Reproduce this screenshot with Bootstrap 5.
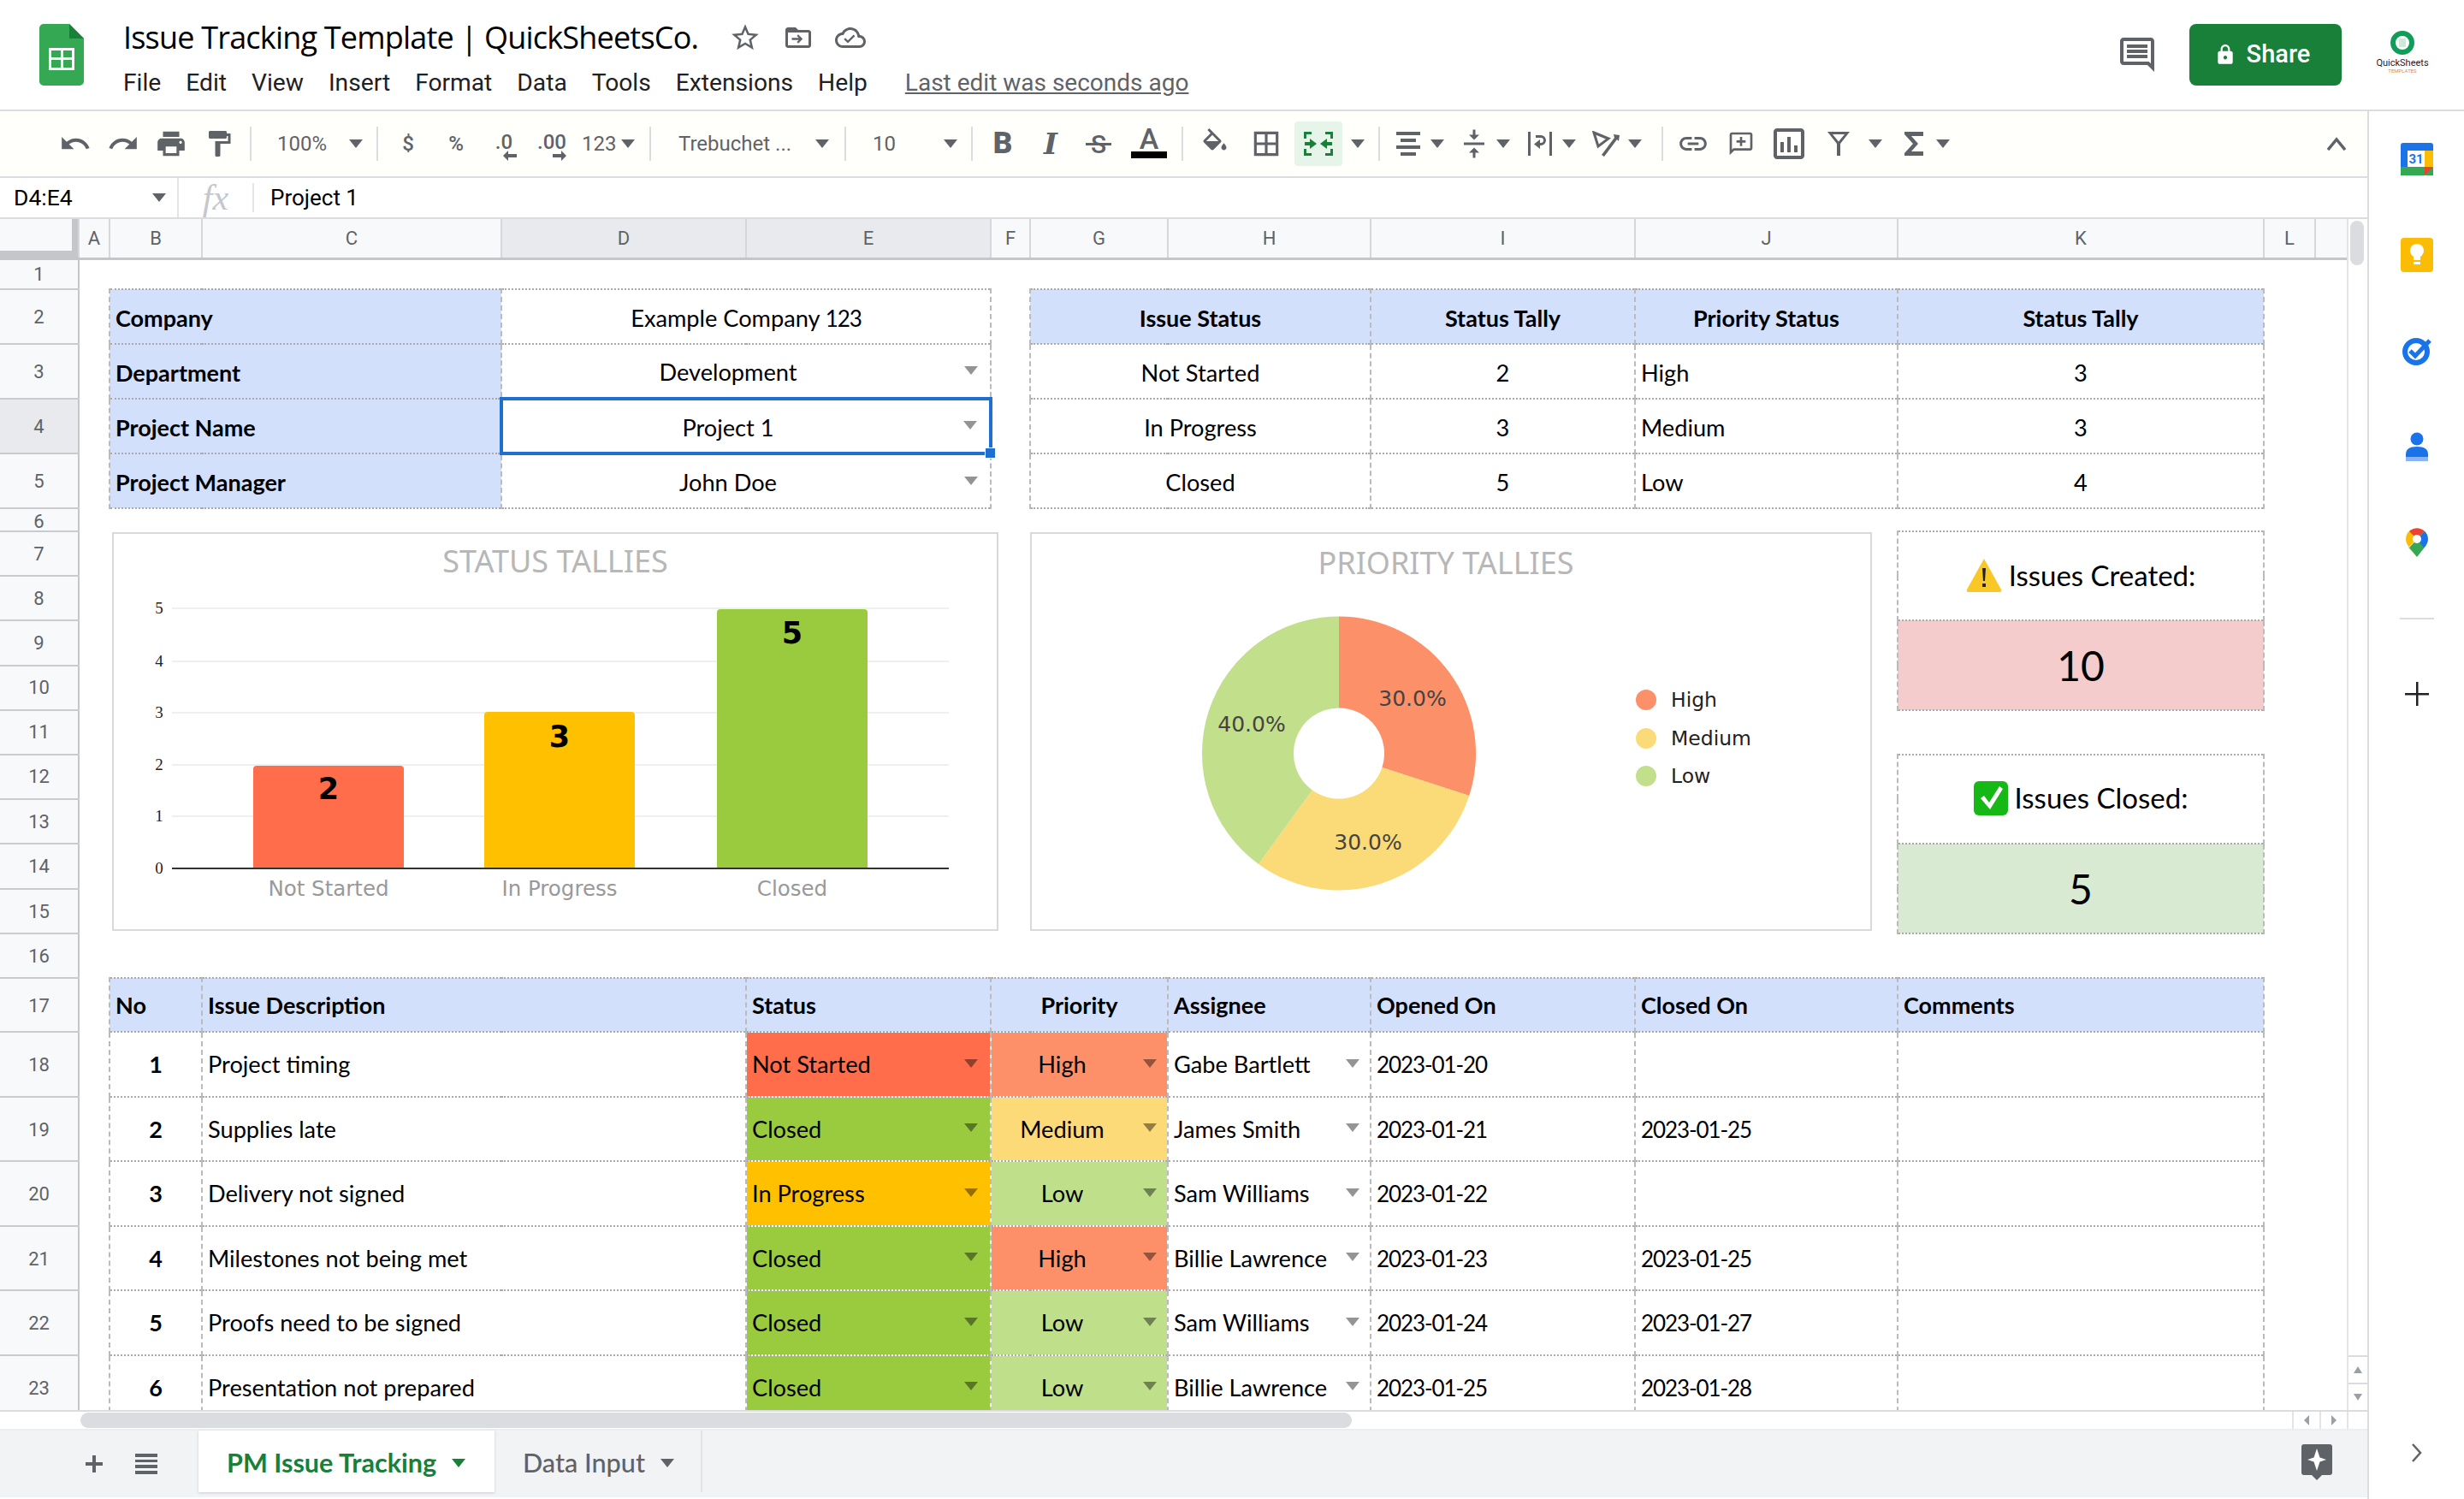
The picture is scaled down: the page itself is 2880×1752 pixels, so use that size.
<!DOCTYPE html>
<html lang="en">
<head>
<meta charset="utf-8">
<title>Issue Tracking Template</title>
<link href="https://cdn.jsdelivr.net/npm/bootstrap@5.3.0/dist/css/bootstrap.min.css" rel="stylesheet">
<style>
html,body{margin:0;width:2880px;height:1752px;overflow:hidden;background:#fff;font-family:Roboto,"Liberation Sans",sans-serif;color:#202124}
svg{display:block;flex:none}
.gi{fill:#5f6368}
.app-head{height:130px;border-bottom:2px solid #dadce0}
.logo{margin-left:46px;margin-top:28px;width:52px;height:72px}
.doc-col{margin-left:46px;padding-top:22px}
.doc-title{font-family:"Open Sans",Roboto,sans-serif;font-size:36px;line-height:44px;color:#000;white-space:nowrap;letter-spacing:-.8px}
.doc-icons{gap:25px;margin-left:36px}
.menu{gap:29px;margin-top:13px;font-size:28.2px;line-height:36px;color:#202124}
.last-edit{color:#5f6368;text-decoration:underline;margin-left:15px;font-size:28px}
.comment-ic{margin-right:37px}
.share{width:178px;height:72px;background:#188038;border-radius:8px;color:#fff;font-size:29px;font-weight:500;gap:12px;margin-right:43px;border:0;padding-right:8px!important}
.share:hover{background:#188038;color:#fff}
.avatar{width:56px;margin-right:44px;margin-top:-6px}
.avatar small{font-size:11px;line-height:11px;color:#222;display:block;white-space:nowrap}
.avatar em{font-size:6px;line-height:8px;color:#d98a3a;font-style:normal;display:block}
.main{height:1622px}
.left{width:2769px;border-right:2px solid #dadce0}
.toolbar{height:78px;border-bottom:2px solid #dadce0;padding-left:60px;padding-right:24px;background:#fffffc;color:#5f6368;font-size:24px}
.tb{width:56px;height:52px;position:relative}
.sep{width:2px;height:40px;background:#dadce0;margin:0 7px}
.sep.first{margin-left:8px}
.caret{width:0;height:0;border-left:8px solid transparent;border-right:8px solid transparent;border-top:10px solid #5f6368;flex:none}
.dd{height:52px}
.dd-zoom{width:132px;padding:0 9px 0 23px}
.dd-num{width:79px;padding-left:7px;gap:6px}
.dd-font{width:212px;padding:0 11px 0 25px}
.dd-size{width:132px;padding:0 9px 0 24px}
.w60{width:60px}.w62{width:62px}
.merge{background:#e6f4ea;border-radius:4px;margin-left:3px}
.w35{width:35px}
.iconcar{width:77px;height:52px}
.iconcar.last{width:84px}
.iconcar>span:first-child{width:52px}
.w26{width:26px}.w14{width:14px;margin-left:-1px}
.sig{margin-left:4px}
.dec{font-size:24px;font-weight:500;margin-top:-5px}
.dec-ar{position:absolute;top:34px}
.dec-ar.l{left:27px}
.dec-ar.r{left:29px}
.fb{font-weight:900;font-size:35px}
.fi{font-family:"DejaVu Serif",serif;font-weight:700;font-style:italic;font-size:34px}
.fs{font-weight:500;font-size:30px}
.fs i{position:absolute;left:13px;right:13px;top:25px;height:3px;background:#5f6368}
.fa{font-weight:500;font-size:34px;line-height:34px;margin-top:-6px}
.abar{width:42px;height:8px;background:#000;margin-top:-2px}
.formula{height:48px;border-bottom:2px solid #dadce0;font-size:26px;color:#000}
.namebox{width:207px;padding:0 13px 0 16px;font-size:26.5px}
.vline{width:2px;height:46px;background:#e3e4e6}
.vline.s{height:34px}
.fx{width:86px;text-align:center;font-family:"Liberation Serif",serif;font-style:italic;font-size:42px;color:#c4c7cb;line-height:1}
.fval{padding-left:19px}
.sheetwrap{height:1392px;overflow:hidden;position:relative}
.sheet-clip{width:2745px;height:1392px;overflow:hidden}
.sheet{width:2745px;table-layout:fixed;border-collapse:collapse;font-family:Lato,"Noto Sans",sans-serif;font-size:27.2px;color:#000;line-height:1}
.sheet td,.sheet th{padding:0 6px;vertical-align:middle;white-space:nowrap;font-weight:400}
.sheet thead th{height:46px;background:#f8f9fa;color:#5f6368;font:400 22px Roboto,sans-serif;text-align:center;border-right:2px solid #d5d7da;border-bottom:3px solid #c4c6c9;padding:0}
.sheet thead th.corner{box-shadow:inset -7px -8px 0 #c4c6c9;background:#f8f9fa}
.sheet thead th.selh{background:#e8eaed}
.sheet tbody th.rh{background:#f8f9fa;color:#5f6368;font:400 22px Roboto,sans-serif;text-align:center;border-right:2px solid #c4c6c9;border-bottom:2px solid #c9cbce;padding:0;overflow:hidden}
.sheet tbody th.rh.selh{background:#e8eaed}
.sheet tbody tr.r26 th.rh{line-height:20px;padding-top:5px;vertical-align:top}
.sheet tbody tr.r63 th.rh,.sheet tbody tr.r75 th.rh{padding-top:2px}
.r36{height:36px}.r64{height:64px}.r26{height:26.5px}.r52{height:52px}.r63{height:63px}.r75{height:75.5px}
.r64 td{padding-top:3px}
.c{border-left:2px dashed #bbb;border-right:2px dashed #bbb;border-top:2px dotted #aaa;border-bottom:2px dotted #aaa}
.sheet td.ctr{text-align:center}
.sheet td.b{font-weight:700;font-size:27px}
.dt{font-size:26px;letter-spacing:-1.1px}
.lab{background:#d3e0fc}
.dd-cell{position:relative}
.sheet td.ddc{padding-left:0;padding-right:42px;text-align:center}
.sheet td.ddc2{padding-left:0;padding-right:40px;text-align:center}
.ar{position:absolute;right:12px;top:50%;margin-top:-6px;width:0;height:0;border-left:8px solid transparent;border-right:8px solid transparent;border-top:10px solid rgba(0,0,0,.42)}
.ar.big{right:14px}
.sel{outline:0;border:4px solid #1f6fd0!important}
.handle{position:absolute;right:-8px;bottom:-8px;width:13px;height:13px;background:#1f6fd0;border:1px solid #fff;z-index:3}
.notst{background:#ff6d4a}.closed{background:#9acb3f}.inprog{background:#ffc000}
.high{background:#fd9069}.med{background:#fbda77}.low{background:#bfdf8a}
.pink{background:#f4cccc}.green{background:#d9ead3}
.sheet td.chartcell{padding:1px 37px 3px 3px;vertical-align:top}
.sheet td.chartcell2{padding:1px 29px 3px 0;vertical-align:top}
.chartbox{border:2px solid #d9d9d9;height:466px;background:#fff}
.t-title{font-family:"Noto Sans",sans-serif;font-size:36px;fill:#b7b7b7}
.t-ax{font-family:"Liberation Serif",serif;font-size:19px;fill:#222}
.t-cat{font-family:"DejaVu Sans",sans-serif;font-size:24.5px;fill:#999}
.t-val{font-family:"DejaVu Sans",sans-serif;font-size:35px;font-weight:700;fill:#000}
.t-pct{font-family:"DejaVu Sans",sans-serif;font-size:25px;fill:#444}
.t-leg{font-family:"DejaVu Sans",sans-serif;font-size:23.5px;fill:#222}
.sheet td.issue{font-size:33px;text-align:center;padding-top:2px}
.sheet td.num{font-size:48px;text-align:center;padding-top:1px}
.vbar{width:24px;border-left:2px solid #e3e4e6;position:relative;background:#fff}
.vthumb{width:16px;height:52px;border-radius:8px;background:#dadce0;margin:2px 0 0 2px}
.varrow{height:32px;border-top:2px solid #dadce0}
.mini-up{width:0;height:0;border-left:5px solid transparent;border-right:5px solid transparent;border-bottom:8px solid #9aa0a6}
.mini-dn{width:0;height:0;border-left:5px solid transparent;border-right:5px solid transparent;border-top:8px solid #9aa0a6}
.mini-l{width:0;height:0;border-top:6px solid transparent;border-bottom:6px solid transparent;border-right:6px solid #9aa0a6}
.mini-r{width:0;height:0;border-top:6px solid transparent;border-bottom:6px solid transparent;border-left:6px solid #9aa0a6}
.hbar{height:24px;border-top:2px solid #dadce0;border-bottom:2px solid #eceef0;padding-left:94px}
.hthumb{width:1486px;height:18px;border-radius:9px;background:#dadce0}
.hbtn{width:32px;height:100%;border-left:2px solid #e3e4e6}
.hbtn.end{width:24px}
.tabs{height:78px;background:#f1f3f4;color:#5f6368}
.tab-tools{width:232px;padding-left:100px;gap:38px;height:100%}
.stab{height:72px;font-family:Lato,"Noto Sans",sans-serif;font-size:30.6px;font-weight:700;gap:18px;white-space:nowrap;padding-top:4px}
.stab.on{width:346px;background:#fff;color:#188038;padding-left:33px;box-shadow:0 1px 3px rgba(60,64,67,.2)}
.stab.on .caret{border-top-color:#188038}
.stab.off{width:243px;padding-left:33px;font-weight:500;border-right:2px solid #e3e4e6}
.explore{margin-right:41px}
.side{width:111px}
.slot{height:112px;width:100%}
.side-div{width:40px;height:2px;background:#dadce0;margin-top:32px}
.plus{margin-top:73px}
.chev{margin-top:auto;margin-bottom:42px}
.side svg text{font-family:Roboto,sans-serif}
.sheet col:nth-child(1){width:92px}.sheet col:nth-child(2){width:36px}.sheet col:nth-child(3){width:108px}.sheet col:nth-child(4){width:350px}.sheet col:nth-child(5),.sheet col:nth-child(6){width:286px}.sheet col:nth-child(7){width:46px}.sheet col:nth-child(8){width:161px}.sheet col:nth-child(9){width:237px}.sheet col:nth-child(10){width:309px}.sheet col:nth-child(11){width:307px}.sheet col:nth-child(12){width:428px}.sheet col:nth-child(13){width:60px}.sheet col:nth-child(14){width:39px}
</style>
</head>
<body>
<header class="app-head d-flex">
  <svg class="logo" viewBox="0 0 52 72"><path d="M5 0h30l17 17v50a5 5 0 0 1-5 5H5a5 5 0 0 1-5-5V5a5 5 0 0 1 5-5z" fill="#34a853"/><path d="M35 0l17 17H35z" fill="#188038"/><path d="M11 28h30v26H11zm3 3v8h11v-8zm14 0v8h10v-8zM14 42v9h11v-9zm14 0v9h10v-9z" fill="#fff" fill-rule="evenodd"/></svg>
  <div class="doc-col">
    <div class="d-flex align-items-center">
      <div class="doc-title">Issue Tracking Template | QuickSheetsCo.</div>
      <div class="doc-icons d-flex align-items-center">
        <svg width="38" height="38" viewBox="0 0 24 24"><path class="gi" d="M22 9.24l-7.19-.62L12 2 9.19 8.63 2 9.24l5.46 4.73L5.82 21 12 17.27 18.18 21l-1.63-7.03L22 9.24zM12 15.4l-3.76 2.27 1-4.28-3.32-2.88 4.38-.38L12 6.1l1.71 4.04 4.38.38-3.32 2.88 1 4.28L12 15.4z"/></svg>
        <svg width="36" height="36" viewBox="0 0 24 24"><path class="gi" d="M20 6h-8l-2-2H4c-1.1 0-2 .9-2 2v12c0 1.1.9 2 2 2h16c1.1 0 2-.9 2-2V8c0-1.1-.9-2-2-2zm0 12H4V8h16v10zM12 9.5l-1.1 1.1 1.6 1.6H7v1.6h5.5l-1.6 1.6 1.1 1.1 3.5-3.5z"/></svg>
        <svg width="36" height="36" viewBox="0 0 24 24"><path class="gi" d="M19.35 10.04C18.67 6.59 15.64 4 12 4 9.11 4 6.6 5.64 5.35 8.04 2.34 8.36 0 10.91 0 14c0 3.31 2.69 6 6 6h13c2.76 0 5-2.24 5-5 0-2.64-2.05-4.78-4.65-4.96zM19 18H6c-2.21 0-4-1.79-4-4 0-2.05 1.53-3.76 3.56-3.97l1.07-.11.5-.95C8.08 7.14 9.94 6 12 6c2.62 0 4.88 1.86 5.39 4.43l.3 1.5 1.53.11c1.56.1 2.78 1.41 2.78 2.96 0 1.65-1.35 3-3 3zM10 14.2l-2-2-1.1 1.1 3.1 3.1 5.6-5.6-1.1-1.1z"/></svg>
      </div>
    </div>
    <nav class="menu d-flex align-items-center">
      <span>File</span><span>Edit</span><span>View</span><span>Insert</span><span>Format</span><span>Data</span><span>Tools</span><span>Extensions</span><span>Help</span><span class="last-edit">Last edit was seconds ago</span>
    </nav>
  </div>
  <div class="ms-auto d-flex align-items-center">
    <svg class="comment-ic" width="48" height="48" viewBox="0 0 24 24"><path class="gi" d="M21.99 4c0-1.1-.89-2-1.99-2H4c-1.1 0-2 .9-2 2v12c0 1.1.9 2 2 2h14l4 4-.01-18zM20 4v13.17L18.83 16H4V4h16zM6 12h12v2H6zm0-3h12v2H6zm0-3h12v2H6z"/></svg>
    <button class="btn share d-flex align-items-center justify-content-center p-0">
      <svg width="26" height="26" viewBox="0 0 24 24"><path fill="#fff" d="M18 8h-1V6c0-2.76-2.24-5-5-5S7 3.24 7 6v2H6c-1.1 0-2 .9-2 2v10c0 1.1.9 2 2 2h12c1.1 0 2-.9 2-2V10c0-1.1-.9-2-2-2zm-6 9c-1.1 0-2-.9-2-2s.9-2 2-2 2 .9 2 2-.9 2-2 2zm3-9H9V6c0-1.66 1.34-3 3-3s3 1.34 3 3v2z"/></svg>
      <span>Share</span>
    </button>
    <div class="avatar d-flex flex-column align-items-center text-center">
      <svg width="28" height="28" viewBox="0 0 28 28"><circle cx="14" cy="14" r="11" fill="#fff" stroke="#0f9d58" stroke-width="6"/><rect x="10" y="9" width="8" height="10" fill="#cfe8d8"/></svg>
      <small class="mt-1">QuickSheets</small><em>TEMPLATES</em>
    </div>
  </div>
</header>

<div class="main d-flex">
  <div class="left d-flex flex-column">
    <div class="toolbar d-flex align-items-center">
      <span class="tb d-flex align-items-center justify-content-center"><svg width="38" height="38" viewBox="0 0 24 24"><path class="gi" d="M12.5 8c-2.65 0-5.05.99-6.9 2.6L2 7v9h9l-3.62-3.62c1.39-1.16 3.16-1.88 5.12-1.88 3.54 0 6.55 2.31 7.6 5.5l2.37-.78C21.08 11.03 17.15 8 12.5 8z"/></svg></span>
      <span class="tb d-flex align-items-center justify-content-center"><svg width="38" height="38" viewBox="0 0 24 24"><path class="gi" d="M18.4 10.6C16.55 8.99 14.15 8 11.5 8c-4.65 0-8.58 3.03-9.96 7.22L3.9 16c1.05-3.19 4.05-5.5 7.6-5.5 1.95 0 3.73.72 5.12 1.88L13 16h9V7l-3.6 3.6z"/></svg></span>
      <span class="tb d-flex align-items-center justify-content-center"><svg width="38" height="38" viewBox="0 0 24 24"><path class="gi" d="M19 8H5c-1.66 0-3 1.34-3 3v6h4v4h12v-4h4v-6c0-1.66-1.34-3-3-3zm-3 11H8v-5h8v5zm3-7c-.55 0-1-.45-1-1s.45-1 1-1 1 .45 1 1-.45 1-1 1zm-1-9H6v4h12V3z"/></svg></span>
      <span class="tb d-flex align-items-center justify-content-center"><svg width="36" height="36" viewBox="0 0 24 24"><path class="gi" d="M18 4V3c0-.55-.45-1-1-1H5c-.55 0-1 .45-1 1v4c0 .55.45 1 1 1h12c.55 0 1-.45 1-1V6h1v4H9v11c0 .55.45 1 1 1h2c.55 0 1-.45 1-1v-9h8V4h-3z"/></svg></span>
      <span class="sep first"></span>
      <span class="dd dd-zoom d-flex align-items-center justify-content-between"><span>100%</span><span class="caret"></span></span>
      <span class="sep"></span>
      <span class="tb d-flex align-items-center justify-content-center fw-medium">$</span>
      <span class="tb d-flex align-items-center justify-content-center fw-medium">%</span>
      <span class="tb d-flex align-items-center justify-content-center"><span class="dec">.0</span><svg class="dec-ar l" width="16" height="12" viewBox="0 0 16 12"><path class="gi" d="M6 0L0 6l6 6V8h10V4H6z"/></svg></span>
      <span class="tb d-flex align-items-center justify-content-center"><span class="dec">.00</span><svg class="dec-ar r" width="16" height="12" viewBox="0 0 16 12"><path class="gi" d="M10 0l6 6-6 6V8H0V4h10z"/></svg></span>
      <span class="dd dd-num d-flex align-items-center"><span>123</span><span class="caret"></span></span>
      <span class="sep"></span>
      <span class="dd dd-font d-flex align-items-center justify-content-between"><span>Trebuchet ...</span><span class="caret"></span></span>
      <span class="sep"></span>
      <span class="dd dd-size d-flex align-items-center justify-content-between"><span>10</span><span class="caret"></span></span>
      <span class="sep"></span>
      <span class="tb d-flex align-items-center justify-content-center fb">B</span>
      <span class="tb d-flex align-items-center justify-content-center fi">I</span>
      <span class="tb d-flex align-items-center justify-content-center fs">S<i></i></span>
      <span class="tb w62 d-flex flex-column align-items-center justify-content-center"><span class="fa">A</span><span class="abar"></span></span>
      <span class="sep"></span>
      <span class="tb w60 d-flex align-items-center justify-content-center"><svg width="36" height="36" viewBox="0 0 24 24"><path class="gi" d="M16.56 8.94L7.62 0 6.21 1.41l2.38 2.38-5.15 5.15c-.59.59-.59 1.54 0 2.12l5.5 5.5c.29.29.68.44 1.06.44s.77-.15 1.06-.44l5.5-5.5c.59-.58.59-1.53 0-2.12zM5.21 10L10 5.21 14.79 10H5.21zM19 11.5s-2 2.17-2 3.5c0 1.1.9 2 2 2s2-.9 2-2c0-1.33-2-3.5-2-3.5z"/></svg></span>
      <span class="tb w60 d-flex align-items-center justify-content-center"><svg width="38" height="38" viewBox="0 0 24 24"><path class="gi" d="M3 3v18h18V3H3zm8 16H5v-6h6v6zm0-8H5V5h6v6zm8 8h-6v-6h6v6zm0-8h-6V5h6v6z"/></svg></span>
      <span class="tb merge d-flex align-items-center justify-content-center"><svg width="34" height="28" viewBox="0 0 34 28" fill="#188038"><path d="M0 0h9v3H3v5H0zM25 0h9v8h-3V3h-6zM0 20h3v5h6v3H0zM31 20h3v8h-9v-3h6z"/><path d="M1 12h6V8l8 6-8 6v-4H1zM33 12h-6V8l-8 6 8 6v-4h6z"/></svg></span>
      <span class="w35 d-flex justify-content-center"><span class="caret"></span></span>
      <span class="sep"></span>
      <span class="iconcar d-flex align-items-center"><span class="d-flex justify-content-center"><svg width="28" height="28" viewBox="0 0 28 28"><path class="gi" d="M0 0h28v4H0zM5 8h18v4H5zM0 16h28v4H0zM5 24h18v4H5z"/></svg></span><span class="caret"></span></span>
      <span class="iconcar d-flex align-items-center"><span class="d-flex justify-content-center"><svg width="36" height="36" viewBox="0 0 24 24"><path class="gi" d="M8 19h3v4h2v-4h3l-4-4-4 4zm8-14h-3V1h-2v4H8l4 4 4-4zM4 11v2h16v-2H4z"/></svg></span><span class="caret"></span></span>
      <span class="iconcar d-flex align-items-center"><span class="d-flex justify-content-center"><svg width="28" height="28" viewBox="0 0 28 28"><path class="gi" d="M0 0h3v28H0zM25 0h3v28h-3zM9 4h6a6 6 0 0 1 0 12h-1v4l-7-5.500 7-5.500v4h1a3 3 0 0 0 0-6H9z"/></svg></span><span class="caret"></span></span>
      <span class="iconcar last d-flex align-items-center"><span class="d-flex justify-content-center"><svg width="32" height="30" viewBox="0 0 32 30"><path d="M2 2l17 7-12 9z" fill="none" stroke="#5f6368" stroke-width="3"/><path class="gi" d="M25 4l7 1-1 7-2-2-15 20-3-2 15-20z"/></svg></span><span class="caret"></span></span>
      <span class="sep"></span>
      <span class="tb d-flex align-items-center justify-content-center"><svg width="38" height="38" viewBox="0 0 24 24"><path class="gi" d="M3.900 12c0-1.710 1.390-3.100 3.100-3.100h4V7H7c-2.760 0-5 2.240-5 5s2.240 5 5 5h4v-1.900H7c-1.710 0-3.100-1.390-3.100-3.100zM8 13h8v-2H8v2zm9-6h-4v1.900h4c1.710 0 3.100 1.390 3.100 3.100s-1.390 3.100-3.100 3.100h-4V17h4c2.760 0 5-2.240 5-5s-2.240-5-5-5z"/></svg></span>
      <span class="tb d-flex align-items-center justify-content-center"><svg width="32" height="32" viewBox="0 0 24 24"><path class="gi" d="M20 2H4c-1.100 0-2 .9-2 2v18l4-4h14c1.100 0 2-.9 2-2V4c0-1.100-.9-2-2-2zm0 14H5.200L4 17.200V4h16v12zM13 6h-2v3H8v2h3v3h2v-3h3V9h-3z"/></svg></span>
      <span class="tb d-flex align-items-center justify-content-center"><svg width="36" height="36" viewBox="3 3 18 18"><path class="gi" d="M19 3H5c-1.100 0-2 .9-2 2v14c0 1.100.9 2 2 2h14c1.100 0 2-.9 2-2V5c0-1.100-.9-2-2-2zm0 16H5V5h14v14zM7 11h2v6H7zM11 8h2v9h-2zM15 13h2v4h-2z"/></svg></span>
      <span class="tb w60 d-flex align-items-center justify-content-center"><svg width="26" height="28" viewBox="0 0 26 28"><path class="gi" d="M0 0h26L15 14v14h-4V14zM6 3l7 8.500L20 3z"/></svg></span>
      <span class="w26 d-flex justify-content-center"><span class="caret"></span></span>
      <span class="tb sig d-flex align-items-center justify-content-center"><svg width="22" height="28" viewBox="0 0 22 28"><path class="gi" d="M0 0h22v5H8l8 9-8 9h14v5H0v-3l10-11L0 3z"/></svg></span>
      <span class="w14 d-flex justify-content-center"><span class="caret"></span></span>
      <svg class="ms-auto" width="24" height="16" viewBox="0 0 24 16"><path d="M2 15L12 3l10 12" fill="none" stroke="#5f6368" stroke-width="3.500"/></svg>
    </div>

    <div class="formula d-flex align-items-center">
      <div class="namebox d-flex align-items-center justify-content-between"><span>D4:E4</span><span class="caret"></span></div>
      <span class="vline"></span>
      <div class="fx">fx</div>
      <span class="vline s"></span>
      <div class="fval">Project 1</div>
    </div>

    <div class="sheetwrap d-flex">
      <div class="sheet-clip">
        <table class="sheet">
          <colgroup><col><col><col><col><col><col><col><col><col><col><col><col><col><col></colgroup>
          <thead>
            <tr><th class="corner"></th><th>A</th><th>B</th><th>C</th><th class="selh">D</th><th class="selh">E</th><th>F</th><th>G</th><th>H</th><th>I</th><th>J</th><th>K</th><th>L</th><th></th></tr>
          </thead>
          <tbody>
            <tr class="r36"><th class="rh">1</th><td colspan="13"></td></tr>
            <tr class="r64"><th class="rh">2</th><td></td><td colspan="2" class="c lab b">Company</td><td colspan="2" class="c ctr">Example Company <span class="dt">123</span></td><td></td><td colspan="2" class="c lab b ctr">Issue Status</td><td class="c lab b ctr">Status Tally</td><td class="c lab b ctr">Priority Status</td><td class="c lab b ctr">Status Tally</td><td colspan="2"></td></tr>
            <tr class="r64"><th class="rh">3</th><td></td><td colspan="2" class="c lab b">Department</td><td colspan="2" class="c ddc dd-cell">Development<span class="ar big"></span></td><td></td><td colspan="2" class="c ctr">Not Started</td><td class="c ctr">2</td><td class="c">High</td><td class="c ctr">3</td><td colspan="2"></td></tr>
            <tr class="r64"><th class="rh selh">4</th><td></td><td colspan="2" class="c lab b">Project Name</td><td colspan="2" class="sel ddc dd-cell">Project 1<span class="ar big"></span><span class="handle"></span></td><td></td><td colspan="2" class="c ctr">In Progress</td><td class="c ctr">3</td><td class="c">Medium</td><td class="c ctr">3</td><td colspan="2"></td></tr>
            <tr class="r64"><th class="rh">5</th><td></td><td colspan="2" class="c lab b">Project Manager</td><td colspan="2" class="c ddc dd-cell">John Doe<span class="ar big"></span></td><td></td><td colspan="2" class="c ctr">Closed</td><td class="c ctr">5</td><td class="c">Low</td><td class="c ctr">4</td><td colspan="2"></td></tr>
            <tr class="r26"><th class="rh">6</th><td colspan="13"></td></tr>
            <tr class="r52"><th class="rh">7</th><td rowspan="9"></td>
              <td colspan="5" rowspan="9" class="chartcell">
                <div class="chartbox">
                  <svg width="1032" height="462" viewBox="133 624 1032 462">
                    <text class="t-title" x="649" y="669" text-anchor="middle">STATUS TALLIES</text>
                    <g stroke="#efefef" stroke-width="2"><path d="M201 711H1109M201 773H1109M201 833H1109M201 894H1109M201 954H1109"/></g>
                    <g text-anchor="middle"><text class="t-ax" x="186" y="717">5</text><text class="t-ax" x="186" y="779">4</text><text class="t-ax" x="186" y="839">3</text><text class="t-ax" x="186" y="900">2</text><text class="t-ax" x="186" y="960">1</text><text class="t-ax" x="186" y="1021">0</text></g>
                    <path d="M296 1015V899a4 4 0 0 1 4-4H468a4 4 0 0 1 4 4V1015z" fill="#ff6d4a"/>
                    <path d="M566 1015V836a4 4 0 0 1 4-4H738a4 4 0 0 1 4 4V1015z" fill="#ffc000"/>
                    <path d="M838 1015V716a4 4 0 0 1 4-4H1010a4 4 0 0 1 4 4V1015z" fill="#9acb3f"/>
                    <path d="M201 1015H1109" stroke="#333" stroke-width="2"/>
                    <text class="t-val" x="384" y="934" text-anchor="middle">2</text>
                    <text class="t-val" x="654" y="873" text-anchor="middle">3</text>
                    <text class="t-val" x="926" y="752" text-anchor="middle">5</text>
                    <text class="t-cat" x="384" y="1047" text-anchor="middle">Not Started</text>
                    <text class="t-cat" x="654" y="1047" text-anchor="middle">In Progress</text>
                    <text class="t-cat" x="926" y="1047" text-anchor="middle">Closed</text>
                  </svg>
                </div>
              </td>
              <td colspan="4" rowspan="9" class="chartcell2">
                <div class="chartbox">
                  <svg width="981" height="462" viewBox="1206 624 981 462">
                    <text class="t-title" x="1690" y="671" text-anchor="middle">PRIORITY TALLIES</text>
                    <path d="M1565 720.500A160 160 0 0 1 1717.200 930L1615.400 897A53 53 0 0 0 1565 827.500z" fill="#fb9069"/>
                    <path d="M1717.200 930A160 160 0 0 1 1471 1010L1533.800 923.400A53 53 0 0 0 1615.400 897z" fill="#fbdb78"/>
                    <path d="M1471 1010A160 160 0 0 1 1565 720.500V827.500A53 53 0 0 0 1533.800 923.400z" fill="#c2df8c"/>
                    <text class="t-pct" x="1651" y="825" text-anchor="middle">30.0%</text>
                    <text class="t-pct" x="1599" y="993" text-anchor="middle">30.0%</text>
                    <text class="t-pct" x="1463" y="855" text-anchor="middle">40.0%</text>
                    <circle cx="1924" cy="818" r="12" fill="#fb9069"/><text class="t-leg" x="1953" y="826">High</text>
                    <circle cx="1924" cy="863" r="12" fill="#fbdb78"/><text class="t-leg" x="1953" y="871">Medium</text>
                    <circle cx="1924" cy="907" r="12" fill="#c2df8c"/><text class="t-leg" x="1953" y="915">Low</text>
                  </svg>
                </div>
              </td>
              <td rowspan="2" class="c issue"><span class="d-inline-flex align-items-center gap-2"><svg width="42" height="40" viewBox="0 0 42 40"><path d="M21 1L41 37a2 2 0 0 1-2 3H3a2 2 0 0 1-2-3z" fill="#f9c826"/><path d="M19 12h4l-1 15h-2zM19 30h4v4h-4z" fill="#222"/></svg><span>Issues Created:</span></span></td>
              <td colspan="2" rowspan="9"></td>
            </tr>
            <tr class="r52"><th class="rh">8</th></tr>
            <tr class="r52"><th class="rh">9</th><td rowspan="2" class="c pink num">10</td></tr>
            <tr class="r52"><th class="rh">10</th></tr>
            <tr class="r52"><th class="rh">11</th><td></td></tr>
            <tr class="r52"><th class="rh">12</th><td rowspan="2" class="c issue"><span class="d-inline-flex align-items-center gap-2"><svg width="40" height="40" viewBox="0 0 40 40"><rect width="40" height="40" rx="6" fill="#16b816"/><path d="M8 20l4-3 6 8L30 6l4 3-15 24z" fill="#fff"/></svg><span>Issues Closed:</span></span></td></tr>
            <tr class="r52"><th class="rh">13</th></tr>
            <tr class="r52"><th class="rh">14</th><td rowspan="2" class="c green num">5</td></tr>
            <tr class="r52"><th class="rh">15</th></tr>
            <tr class="r52"><th class="rh">16</th><td colspan="13"></td></tr>
            <tr class="r63"><th class="rh">17</th><td></td><td class="c lab b">No</td><td colspan="2" class="c lab b">Issue Description</td><td class="c lab b">Status</td><td colspan="2" class="c lab b ctr">Priority</td><td class="c lab b">Assignee</td><td class="c lab b">Opened On</td><td class="c lab b">Closed On</td><td class="c lab b">Comments</td><td colspan="2"></td></tr>
            <tr class="r75"><th class="rh">18</th><td></td><td class="c b ctr">1</td><td colspan="2" class="c">Project timing</td><td class="c notst dd-cell">Not Started<span class="ar big"></span></td><td colspan="2" class="c high ddc2 dd-cell">High<span class="ar"></span></td><td class="c dd-cell">Gabe Bartlett<span class="ar"></span></td><td class="c"><span class="dt">2023-01-20</span></td><td class="c"></td><td class="c"></td><td colspan="2"></td></tr>
            <tr class="r75"><th class="rh">19</th><td></td><td class="c b ctr">2</td><td colspan="2" class="c">Supplies late</td><td class="c closed dd-cell">Closed<span class="ar big"></span></td><td colspan="2" class="c med ddc2 dd-cell">Medium<span class="ar"></span></td><td class="c dd-cell">James Smith<span class="ar"></span></td><td class="c"><span class="dt">2023-01-21</span></td><td class="c"><span class="dt">2023-01-25</span></td><td class="c"></td><td colspan="2"></td></tr>
            <tr class="r75"><th class="rh">20</th><td></td><td class="c b ctr">3</td><td colspan="2" class="c">Delivery not signed</td><td class="c inprog dd-cell">In Progress<span class="ar big"></span></td><td colspan="2" class="c low ddc2 dd-cell">Low<span class="ar"></span></td><td class="c dd-cell">Sam Williams<span class="ar"></span></td><td class="c"><span class="dt">2023-01-22</span></td><td class="c"></td><td class="c"></td><td colspan="2"></td></tr>
            <tr class="r75"><th class="rh">21</th><td></td><td class="c b ctr">4</td><td colspan="2" class="c">Milestones not being met</td><td class="c closed dd-cell">Closed<span class="ar big"></span></td><td colspan="2" class="c high ddc2 dd-cell">High<span class="ar"></span></td><td class="c dd-cell">Billie Lawrence<span class="ar"></span></td><td class="c"><span class="dt">2023-01-23</span></td><td class="c"><span class="dt">2023-01-25</span></td><td class="c"></td><td colspan="2"></td></tr>
            <tr class="r75"><th class="rh">22</th><td></td><td class="c b ctr">5</td><td colspan="2" class="c">Proofs need to be signed</td><td class="c closed dd-cell">Closed<span class="ar big"></span></td><td colspan="2" class="c low ddc2 dd-cell">Low<span class="ar"></span></td><td class="c dd-cell">Sam Williams<span class="ar"></span></td><td class="c"><span class="dt">2023-01-24</span></td><td class="c"><span class="dt">2023-01-27</span></td><td class="c"></td><td colspan="2"></td></tr>
            <tr class="r75"><th class="rh">23</th><td></td><td class="c b ctr">6</td><td colspan="2" class="c">Presentation not prepared</td><td class="c closed dd-cell">Closed<span class="ar big"></span></td><td colspan="2" class="c low ddc2 dd-cell">Low<span class="ar"></span></td><td class="c dd-cell">Billie Lawrence<span class="ar"></span></td><td class="c"><span class="dt">2023-01-25</span></td><td class="c"><span class="dt">2023-01-28</span></td><td class="c"></td><td colspan="2"></td></tr>
          </tbody>
        </table>
      </div>
      <div class="vbar d-flex flex-column">
        <div class="vthumb"></div>
        <div class="mt-auto varrow d-flex align-items-center justify-content-center"><span class="mini-up"></span></div>
        <div class="varrow d-flex align-items-center justify-content-center"><span class="mini-dn"></span></div>
      </div>
    </div>

    <div class="hbar d-flex align-items-center">
      <div class="hthumb"></div>
      <div class="hbtn ms-auto d-flex align-items-center justify-content-center"><span class="mini-l"></span></div>
      <div class="hbtn d-flex align-items-center justify-content-center"><span class="mini-r"></span></div>
      <div class="hbtn end"></div>
    </div>

    <div class="tabs d-flex align-items-start">
      <div class="tab-tools d-flex align-items-center">
        <svg width="20" height="20" viewBox="0 0 20 20"><path class="gi" d="M8 0h4v8h8v4h-8v8H8v-8H0V8h8z"/></svg>
        <svg width="26" height="24" viewBox="0 0 26 24"><path class="gi" d="M0 0h26v4H0zM0 7h26v3H0zM0 13h26v4H0zM0 20h26v4H0z"/></svg>
      </div>
      <div class="stab on d-flex align-items-center"><span>PM Issue Tracking</span><span class="caret"></span></div>
      <div class="stab off d-flex align-items-center"><span>Data Input</span><span class="caret"></span></div>
      <svg class="explore ms-auto mt-3" width="36" height="42" viewBox="0 0 36 42"><path d="M3 0h30a3 3 0 0 1 3 3v30a3 3 0 0 1-3 3h-9l-6 6-6-6H3a3 3 0 0 1-3-3V3a3 3 0 0 1 3-3z" fill="#5f6368"/><path d="M18 5l3.500 10.500L29 18l-7.500 2.500L18 31l-3.500-10.500L7 18l7.500-2.500z" fill="#fff"/></svg>
    </div>
  </div>

  <aside class="side d-flex flex-column align-items-center">
    <div class="slot d-flex align-items-center justify-content-center">
      <svg width="38" height="38" viewBox="0 0 38 38"><rect width="38" height="38" rx="3" fill="#1a73e8"/><rect x="0" y="28" width="38" height="10" fill="#34a853"/><rect x="28" y="9" width="10" height="20" fill="#fbbc04"/><path d="M28 38l10-10h-10z" fill="#ea4335"/><rect x="8" y="9" width="20" height="19" fill="#fff"/><text x="18" y="24" font-size="15" font-weight="700" fill="#1a73e8" text-anchor="middle">31</text></svg>
    </div>
    <div class="slot d-flex align-items-center justify-content-center">
      <svg width="38" height="40" viewBox="0 0 38 40"><rect width="38" height="40" rx="4" fill="#fbbc04"/><circle cx="19" cy="15" r="8" fill="#fff"/><rect x="15" y="20" width="8" height="6" fill="#fff"/><rect x="15" y="28" width="8" height="3" fill="#fff"/></svg>
    </div>
    <div class="slot d-flex align-items-center justify-content-center">
      <svg width="36" height="34" viewBox="0 0 36 34"><circle cx="17" cy="18" r="13" fill="none" stroke="#1a73e8" stroke-width="6"/><path d="M10 17l6 6L33 5" fill="none" stroke="#1a73e8" stroke-width="5"/></svg>
    </div>
    <div class="slot d-flex align-items-center justify-content-center">
      <svg width="30" height="34" viewBox="0 0 30 34"><circle cx="15" cy="8" r="7.500" fill="#1a73e8"/><path d="M2 34V26q0-9 13-9t13 9v8z" fill="#1a73e8"/><path d="M2 29h26v5H2z" fill="#8ab4f8"/></svg>
    </div>
    <div class="slot d-flex align-items-center justify-content-center">
      <svg width="26" height="34" viewBox="0 0 26 34"><path d="M13 34C5 24 0 19 0 13a13 13 0 0 1 22-9L3 23z" fill="#fbbc04"/><path d="M4 4a13 13 0 0 1 18 0l-9 9z" fill="#ea4335"/><path d="M22 4a13 13 0 0 1 4 9c0 6-5 11-13 21l-9-11z" fill="#34a853"/><path d="M22 4a13 13 0 0 1-1 19L13 13z" fill="#1a73e8"/><circle cx="13" cy="13" r="5" fill="#fff"/></svg>
    </div>
    <div class="side-div"></div>
    <svg class="plus" width="28" height="28" viewBox="0 0 28 28"><path d="M13 0h2.500v13H28v2.500H15.500V28H13V15.500H0V13h13z" fill="#202124"/></svg>
    <svg class="chev" width="14" height="24" viewBox="0 0 14 24"><path d="M2 2l9 10-9 10" fill="none" stroke="#5f6368" stroke-width="2.500"/></svg>
  </aside>
</div>
<script src="https://cdn.jsdelivr.net/npm/bootstrap@5.3.0/dist/js/bootstrap.bundle.min.js"></script>
</body>
</html>
